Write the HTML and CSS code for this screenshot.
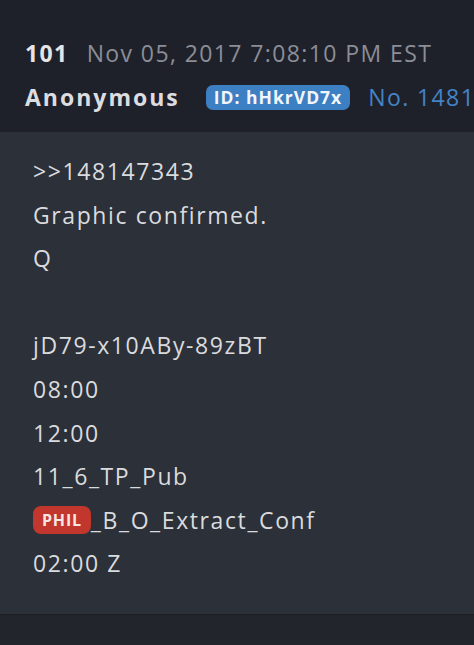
FILE: index.html
```html
<!DOCTYPE html>
<html lang="en">
<head>
    <meta charset="UTF-8">
    <meta name="viewport" content="width=device-width, initial-scale=1.0">
    <title>Post 101</title>
    <link rel="stylesheet" href="styles.css">
</head>
<body>
    <div class="post">
        <div class="post-head">
            <div class="meta-row">
                <span class="num">101</span>
                <span class="date">Nov 05, 2017 7:08:10 PM EST</span>
            </div>
            <div class="meta-row">
                <span class="name">Anonymous</span>
                <span class="id-badge">ID: hHkrVD7x</span>
                <span class="post-no">No. 1481</span>
            </div>
        </div>

        <div class="post-body">
            <div class="line">&gt;&gt;148147343</div>
            <div class="line">Graphic confirmed.</div>
            <div class="line">Q</div>
            <div class="line">&nbsp;</div>
            <div class="line">jD79-x10ABy-89zBT</div>
            <div class="line">08:00</div>
            <div class="line">12:00</div>
            <div class="line">11_6_TP_Pub</div>
            <div class="line"><span class="tag">PHIL</span>_B_O_Extract_Conf</div>
            <div class="line">02:00 Z</div>
        </div>

        <div class="post-foot"></div>
    </div>
</body>
</html>
```

FILE: styles.css
```css
body {
    margin: 0;
    padding: 0;
    background-color: #1f212a;
    font-family: 'Open Sans', 'Noto Sans', sans-serif;
    overflow: hidden;
}

.post {
    display: flex;
    flex-direction: column;
    height: 645px;
}

.post-head {
    height: 132px;
    box-sizing: border-box;
    padding: 31px 0 0 25px;
    background-color: #1f212a;
    white-space: nowrap;
    overflow: hidden;
}

.meta-row {
    display: flex;
    align-items: center;
    height: 44px;
    font-size: 23px;
    letter-spacing: 1.4px;
}

.num {
    color: #e4e5e8;
    font-weight: 700;
    margin-right: 18px;
}

.date {
    color: #8b8e97;
}

.name {
    color: #dcdde0;
    font-weight: 700;
    letter-spacing: 2px;
    margin-right: 26px;
}

.id-badge {
    background-color: #3c7fc3;
    color: #f2f6fb;
    font-size: 17.5px;
    font-weight: 700;
    letter-spacing: 1px;
    line-height: 21px;
    padding: 2px 8px;
    border-radius: 7px;
    margin-right: 18px;
}

.post-no {
    color: #4384c7;
}

.post-body {
    flex: 1;
    background-color: #2c3038;
    padding: 18px 0 0 33px;
    color: #dadbde;
    font-size: 23px;
    letter-spacing: 1.6px;
}

.line {
    height: 43.6px;
    line-height: 43.6px;
}

.tag {
    background-color: #c1372e;
    color: #f5e6e4;
    font-size: 16px;
    font-weight: 700;
    letter-spacing: 0.8px;
    padding: 3px 9px;
    border-radius: 8px;
    vertical-align: 3px;
}

.post-foot {
    height: 30px;
    background-color: #22252c;
    border-top: 1px solid #1b1d23;
}
```
